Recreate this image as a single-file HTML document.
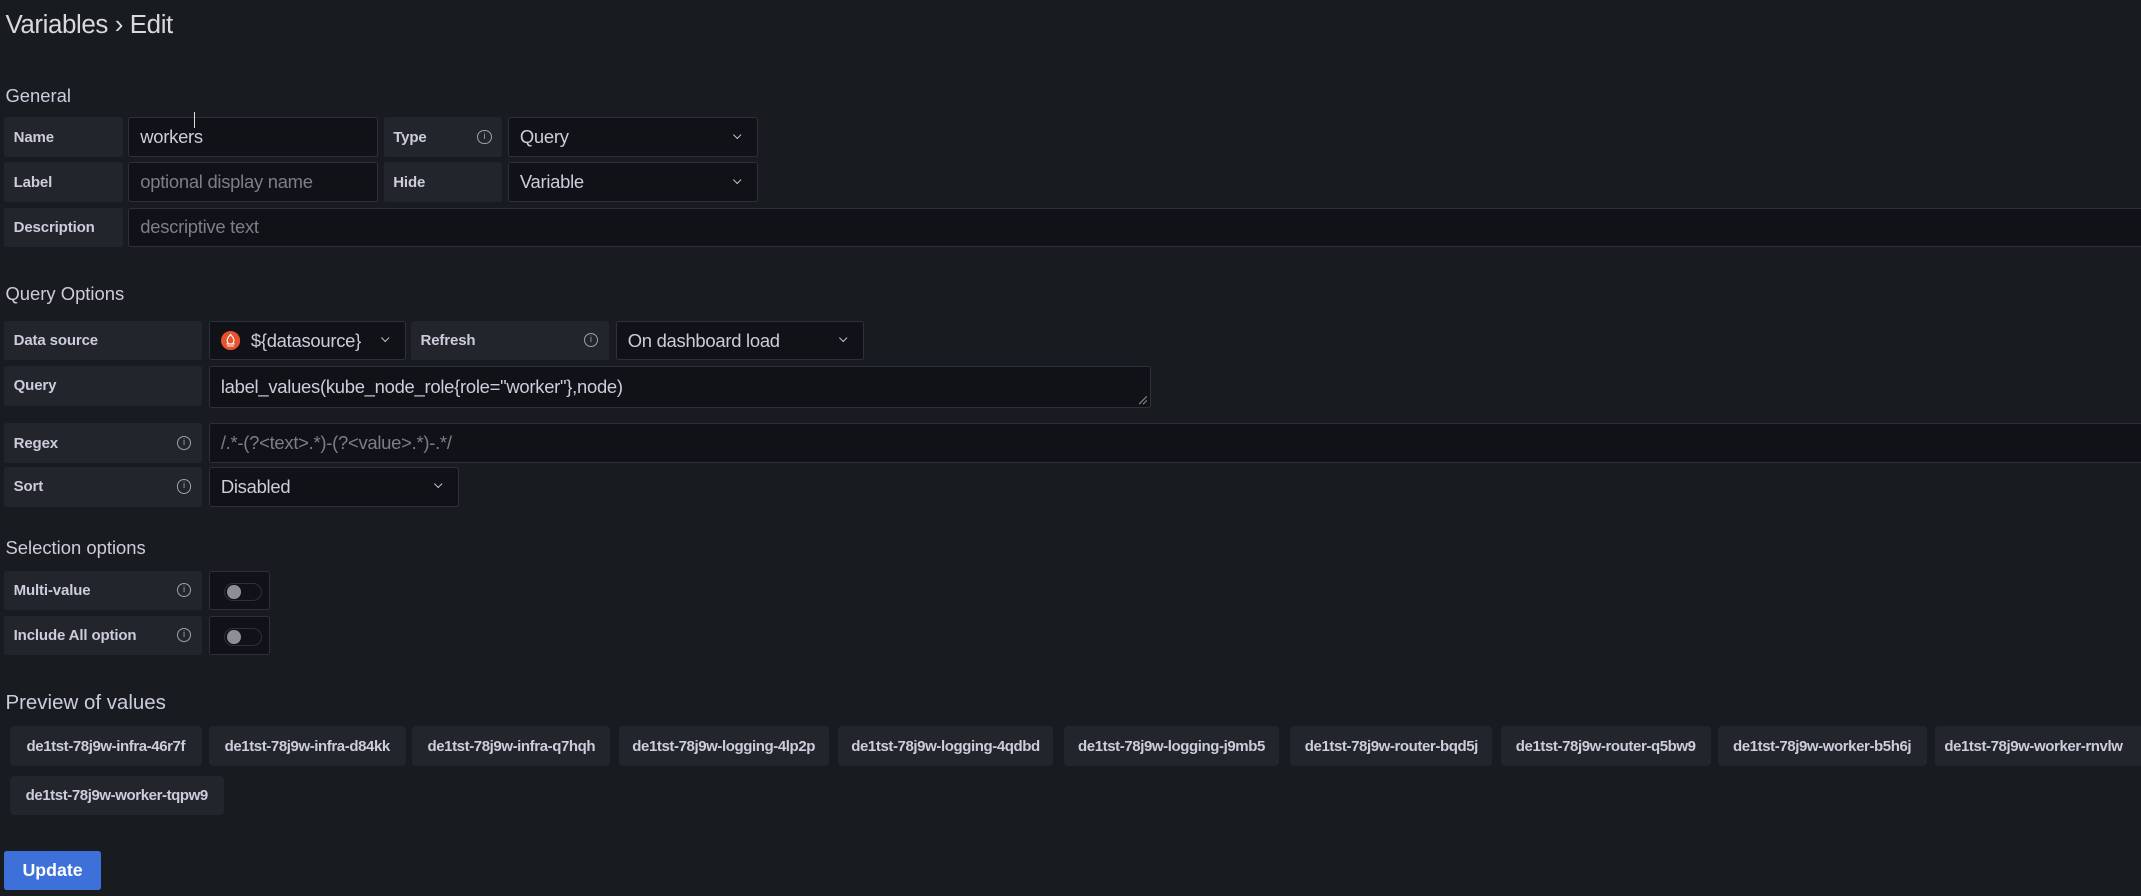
<!DOCTYPE html>
<html><head><meta charset="utf-8"><style>
html,body{margin:0;padding:0;background:#181b1f;overflow:hidden}
body{width:2141px;height:896px}
#w{zoom:1.3654;position:relative;width:1568px;height:656px;font-family:"Liberation Sans",sans-serif;color:#ccccdc}
.a{position:absolute;box-sizing:border-box}
.h{font-size:13.5px;color:#ccccdc}
.l{background:#22252b;border-radius:2px;font-size:11px;font-weight:bold;padding-left:7px;display:flex;align-items:center;color:#ccccdc;letter-spacing:-0.1px}
.i{background:#111217;border:1px solid #2c3038;border-radius:2px;font-size:13.5px;padding-left:8px;display:flex;align-items:center;color:#ccccdc;letter-spacing:-0.2px}
.ph{color:#7b7f87}
.info{position:absolute;right:8px;top:50%;margin-top:-5.5px;width:9px;height:9px;border:1px solid #9fa1a8;border-radius:50%;font-size:7px;line-height:9px;text-align:center;color:#9fa1a8;font-weight:normal}
.chev{position:absolute;right:12px;top:50%;margin-top:-4px;width:4px;height:4px;border-right:1px solid #ccccdc;border-bottom:1px solid #ccccdc;transform:rotate(45deg)}
.c{background:#22252b;border-radius:3px;font-size:11px;font-weight:bold;display:flex;align-items:center;justify-content:center;color:#ccccdc;height:29px;letter-spacing:-0.3px;white-space:nowrap;overflow:hidden}
.tg{position:absolute;left:10px;top:8px;width:27px;height:12px;border:1px solid #2c3038;border-radius:7px;background:#111217}
.tg:after{content:"";position:absolute;left:2px;top:1px;width:10px;height:10px;border-radius:50%;background:#8e8f95}
</style></head><body><div id="w">
<div class="a" style="left:4px;top:8px;font-size:19px;color:#d8d9da;letter-spacing:-0.3px">Variables › Edit</div>
<div class="a h" style="left:4px;top:62px">General</div>
<div class="a l" style="left:3px;top:86px;width:87px;height:29px">Name</div>
<div class="a i" style="left:94px;top:86px;width:183px;height:29px">workers</div>
<div class="a l" style="left:281px;top:86px;width:87px;height:29px">Type<span class="info">i</span></div>
<div class="a i" style="left:372px;top:86px;width:183px;height:29px">Query<span class="chev"></span></div>
<div class="a l" style="left:3px;top:119px;width:87px;height:29px">Label</div>
<div class="a i ph" style="left:94px;top:119px;width:183px;height:29px">optional display name</div>
<div class="a l" style="left:281px;top:119px;width:87px;height:29px">Hide</div>
<div class="a i" style="left:372px;top:119px;width:183px;height:29px">Variable<span class="chev"></span></div>
<div class="a l" style="left:3px;top:152px;width:87px;height:29px">Description</div>
<div class="a i ph" style="left:94px;top:152px;width:1480px;height:29px">descriptive text</div>
<div class="a" style="left:142px;top:82px;width:1px;height:12px;background:#ddd"></div>
<div class="a h" style="left:4px;top:207px">Query Options</div>
<div class="a l" style="left:3px;top:235px;width:145px;height:29px">Data source</div>
<div class="a i" style="left:153px;top:235px;width:144px;height:29px"><svg width="14" height="14" viewBox="0 0 14 14" style="margin-right:8px"><circle cx="7" cy="7" r="7" fill="#e6522c"/><path d="M4 9.5h6M4.5 11h5M7 2.5c-1 1.5-2.5 2.5-2.5 4.5 0 1 .7 2 1 2.5h3c.3-.5 1-1.5 1-2.5C9.5 5 8 4 7 2.5z" stroke="#fff" stroke-width="0.8" fill="none"/></svg>${datasource}<span class="chev"></span></div>
<div class="a l" style="left:301px;top:235px;width:145px;height:29px">Refresh<span class="info">i</span></div>
<div class="a i" style="left:451px;top:235px;width:182px;height:29px">On dashboard load<span class="chev"></span></div>
<div class="a l" style="left:3px;top:268px;width:145px;height:29px">Query</div>
<div class="a i" style="left:153px;top:268px;width:690px;height:31px">label_values(kube_node_role{role="worker"},node)<svg class="a" style="right:2px;bottom:2px" width="6" height="6"><path d="M6 0L0 6M6 3L3 6" stroke="#888" stroke-width="0.8"/></svg></div>
<div class="a l" style="left:3px;top:310px;width:145px;height:29px">Regex<span class="info">i</span></div>
<div class="a i ph" style="left:153px;top:310px;width:1420px;height:29px">/.*-(?&lt;text&gt;.*)-(?&lt;value&gt;.*)-.*/</div>
<div class="a l" style="left:3px;top:342px;width:145px;height:29px">Sort<span class="info">i</span></div>
<div class="a i" style="left:153px;top:342px;width:183px;height:29px">Disabled<span class="chev"></span></div>
<div class="a h" style="left:4px;top:393px">Selection options</div>
<div class="a l" style="left:3px;top:418px;width:145px;height:29px">Multi-value<span class="info">i</span></div>
<div class="a i" style="left:153px;top:418px;width:45px;height:29px"><span class="tg"></span></div>
<div class="a l" style="left:3px;top:451px;width:145px;height:29px">Include All option<span class="info">i</span></div>
<div class="a i" style="left:153px;top:451px;width:45px;height:29px"><span class="tg"></span></div>
<div class="a" style="left:4px;top:506px;font-size:15px;color:#ccccdc">Preview of values</div>
<div class="a c" style="left:7px;top:532px;width:141px">de1tst-78j9w-infra-46r7f</div>
<div class="a c" style="left:153px;top:532px;width:144px">de1tst-78j9w-infra-d84kk</div>
<div class="a c" style="left:302px;top:532px;width:145px">de1tst-78j9w-infra-q7hqh</div>
<div class="a c" style="left:453px;top:532px;width:154px">de1tst-78j9w-logging-4lp2p</div>
<div class="a c" style="left:614px;top:532px;width:157px">de1tst-78j9w-logging-4qdbd</div>
<div class="a c" style="left:779px;top:532px;width:158px">de1tst-78j9w-logging-j9mb5</div>
<div class="a c" style="left:945px;top:532px;width:148px">de1tst-78j9w-router-bqd5j</div>
<div class="a c" style="left:1099px;top:532px;width:154px">de1tst-78j9w-router-q5bw9</div>
<div class="a c" style="left:1258px;top:532px;width:153px">de1tst-78j9w-worker-b5h6j</div>
<div class="a c" style="left:1417px;top:532px;width:160px;justify-content:flex-start;padding-left:7px">de1tst-78j9w-worker-rnvlw</div>
<div class="a c" style="left:7px;top:568px;width:157px">de1tst-78j9w-worker-tqpw9</div>
<div class="a" style="left:3px;top:623px;width:71px;height:29px;background:#3d71d9;border-radius:2px;color:#fff;font-size:13px;font-weight:bold;display:flex;align-items:center;justify-content:center">Update</div>
</div></body></html>
